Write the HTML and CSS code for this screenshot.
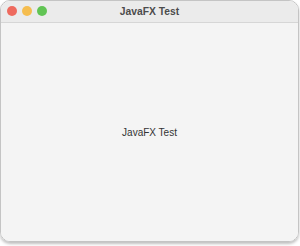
FILE: index.html
```html
<!DOCTYPE html>
<html lang="en">

<head>
    <meta charset="UTF-8">
    <title>JavaFX Test</title>
    <link rel="stylesheet" href="styles.css">
</head>

<body>
    <div class="window">
        <div class="titlebar">
            <div class="lights">
                <span class="light red"></span>
                <span class="light yellow"></span>
                <span class="light green"></span>
            </div>
            <div class="title">JavaFX Test</div>
        </div>
        <div class="content">
            <span class="label">JavaFX Test</span>
        </div>
    </div>
</body>

</html>
```

FILE: styles.css
```css
* {
    padding: 0;
    margin: 0;
    box-sizing: border-box;
}

body {
    width: 300px;
    height: 246px;
    background: #ffffff;
    font-family: "Helvetica Neue", "Liberation Sans", Arial, sans-serif;
}

.window {
    width: 299px;
    height: 242px;
    border: 1px solid #c4c4c4;
    border-radius: 10px;
    overflow: hidden;
    display: flex;
    flex-direction: column;
    box-shadow: 0 2px 3px rgba(0, 0, 0, 0.25);
}

.titlebar {
    height: 22px;
    background: #ebebeb;
    border-bottom: 1px solid #d6d6d6;
    display: flex;
    align-items: center;
    justify-content: center;
    position: relative;
}

.lights {
    position: absolute;
    left: 6px;
    top: 5px;
    display: flex;
    gap: 5px;
}

.light {
    width: 10px;
    height: 10px;
    border-radius: 50%;
}

.red {
    background: #ee6a5e;
}

.yellow {
    background: #f5bd4f;
}

.green {
    background: #61c454;
}

.title {
    font-size: 10.3px;
    font-weight: bold;
    color: #4c4c4c;
}

.content {
    flex: 1;
    background: #f4f4f4;
    display: flex;
    align-items: center;
    justify-content: center;
    padding-top: 1px;
}

.label {
    font-size: 10px;
    color: #333333;
}
```
